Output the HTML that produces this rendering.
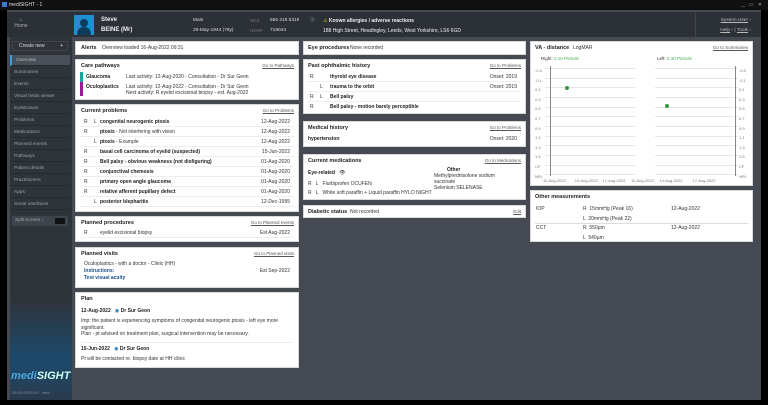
<!DOCTYPE html>
<html><head><meta charset="utf-8"><style>
*{margin:0;padding:0;box-sizing:border-box}
body{width:768px;height:405px;overflow:hidden;background:#000;font-family:"Liberation Sans",sans-serif;font-size:5px;color:#333;position:relative}
.a{position:absolute}
.p{position:absolute;background:#fff;border:1px solid #d8d8d8}
.h{position:absolute;font-weight:bold;font-size:5.5px;color:#222}
.lk{position:absolute;right:4px;text-decoration:underline;color:#555;font-size:4.5px}
.r{position:absolute;left:4px;right:4px;height:10px;border-bottom:1px solid #eee;line-height:10px;white-space:nowrap}
.r span{position:absolute}
b{color:#222}
.nav{position:absolute;left:10px;width:60px;height:11px;line-height:11px;padding-left:4px;color:#9aa0a8;font-size:4.8px;border-bottom:1px solid #262a30}
.g{position:absolute;left:14px;right:14px;height:1px;background:#e6e6e6}
.yl{position:absolute;font-size:4px;color:#777}
</style></head><body>
<div class="a" style="left:0;top:0;width:768px;height:10px;background:#111;color:#ddd;font-size:5px;line-height:10px;padding-left:9px"><span style="position:absolute;left:2px;top:2px;width:5px;height:5px;background:#3a7bd5"></span>mediSIGHT - 1<span style="position:absolute;right:6px;color:#aaa">_ &nbsp; ▭ &nbsp; ✕</span></div>
<div class="a" style="left:7px;top:10px;width:754px;height:390px;background:#454a52"></div>
<div class="a" style="left:7px;top:12px;width:754px;height:25px;background:#2c3037"></div>
<div class="a" style="left:7px;top:12px;width:28px;height:25px;color:#aaa;text-align:center;font-size:5px;padding-top:5px">⌂<br>Home</div>
<div class="a" style="left:74px;top:15px;width:20px;height:20px;background:#1e8fd0"><svg width="20" height="20"><circle cx="10" cy="8" r="4" fill="#0d3d5c"/><path d="M3 20 Q3 12 10 12 Q17 12 17 20Z" fill="#0d3d5c"/></svg></div>
<div class="a" style="left:101px;top:15px;color:#eee;font-weight:bold;font-size:6px;line-height:10px">Steve<br>BEINE (Mr)</div>
<div class="a" style="left:193px;top:16px;color:#ddd;font-size:4.8px;line-height:10px">Male<br>29-May-1944 (78y)</div>
<div class="a" style="left:250px;top:16px;color:#777;font-size:4.5px;line-height:10px">NHS<br>HOSP</div>
<div class="a" style="left:270px;top:16px;color:#ddd;font-size:4.8px;line-height:10px">656 218 5319<br>719044</div>
<div class="a" style="left:310px;top:16px;color:#ddd;font-size:4.8px">ⓘ</div>
<div class="a" style="left:323px;top:16px;color:#eee;font-size:5px;line-height:10px"><span style="color:#e8c200">⚠</span> <b style="color:#eee">Known allergies / adverse reactions</b><br>188 High Street, Headingley, Leeds, West Yorkshire, LS6 6GD</div>
<div class="a" style="left:695px;top:12px;width:1px;height:25px;background:#444"></div>
<div class="a" style="right:17px;top:16px;color:#bbb;font-size:4.8px;line-height:10px;text-align:right"><u>System User</u> ›<br><u>Help</u> › | <u>Tools</u> ›</div>
<!-- sidebar -->
<div class="a" style="left:10px;top:37px;width:62px;height:363px;background:#2f343b"></div>
<div class="a" style="left:10px;top:300px;width:62px;height:100px;background:linear-gradient(#2f343b,#1c4a6e 60%,#2a3a4c)"></div>
<div class="a" style="left:12px;top:41px;width:56px;height:10px;border:1px solid #444;color:#ddd;font-size:5px;line-height:9px;padding-left:6px">Create new<span style="position:absolute;right:4px">+</span></div>
<div class="nav" style="top:55px;background:#4a5058;color:#bbb;border-left:2px solid #3aa0e0">Overview</div>
<div class="nav" style="top:67px">Summaries</div>
<div class="nav" style="top:79px">Events</div>
<div class="nav" style="top:91px">Visual fields viewer</div>
<div class="nav" style="top:103px">EyeBrowse</div>
<div class="nav" style="top:115px">Problems</div>
<div class="nav" style="top:127px">Medications</div>
<div class="nav" style="top:139px">Planned events</div>
<div class="nav" style="top:151px">Pathways</div>
<div class="nav" style="top:163px">Patient details</div>
<div class="nav" style="top:175px">Practitioners</div>
<div class="nav" style="top:187px">Apps</div>
<div class="nav" style="top:199px">Serial interfaces</div>
<div class="a" style="left:12px;top:216px;width:56px;height:10px;background:#3e444c;color:#aaa;font-size:4.8px;line-height:10px;padding-left:3px">Split-screen ›<span style="position:absolute;right:3px;top:2px;width:10px;height:6px;background:#111"></span></div>
<div class="a" style="left:11px;top:370px;color:#4aa8e0;font-size:11px;font-style:italic;font-weight:bold">medi<span style="color:#cfe">SIGHT</span></div>
<div class="a" style="left:12px;top:391px;color:#889;font-size:3.5px">DEVELOPED BY &nbsp; medi</div>
<!-- col1 -->
<div class="p" style="left:75px;top:41px;width:224px;height:14px"><div class="h" style="left:5px;top:3px">Alerts</div><div class="a" style="left:26px;top:3px">Overview loaded 16-Aug-2022 09:31</div></div>
<div class="p" style="left:75px;top:59px;width:224px;height:41px"><div class="h" style="left:5px;top:3px">Care pathways</div><div class="lk" style="top:3px">Go to Pathways</div>
<div class="a" style="left:4px;top:12px;width:3px;height:10px;background:#1aa5a0"></div><div class="a" style="left:4px;top:22px;width:3px;height:14px;background:#a0189a"></div>
<div class="a" style="left:10px;top:14px"><b>Glaucoma</b></div><div class="a" style="left:50px;top:14px">Last activity: 12-Aug-2020 - Consultation - Dr Sur Geon</div>
<div class="a" style="left:10px;top:24px"><b>Oculoplastics</b></div><div class="a" style="left:50px;top:24px;line-height:6px">Last activity: 12-Aug-2022 - Consultation - Dr Sur Geon<br>Next activity: R eyelid excisional biopsy - est. Aug-2022</div></div>
<div class="p" style="left:75px;top:104px;width:224px;height:108px"><div class="h" style="left:5px;top:3px">Current problems</div><div class="lk" style="top:3px">Go to Problems</div>
<div class="r" style="top:12px"><span style="left:4px">R</span><span style="left:14px">L</span><span style="left:20px"><b>congenital neurogenic ptosis</b></span><span style="right:4px">12-Aug-2022</span></div>
<div class="r" style="top:22px"><span style="left:4px">R</span><span style="left:20px"><b>ptosis</b> - Not interfering with vision</span><span style="right:4px">12-Aug-2022</span></div>
<div class="r" style="top:32px"><span style="left:14px">L</span><span style="left:20px"><b>ptosis</b> - Example</span><span style="right:4px">12-Aug-2022</span></div>
<div class="r" style="top:42px"><span style="left:4px">R</span><span style="left:20px"><b>basal cell carcinoma of eyelid (suspected)</b></span><span style="right:4px">15-Jun-2022</span></div>
<div class="r" style="top:52px"><span style="left:4px">R</span><span style="left:20px"><b>Bell palsy - obvious weakness (not disfiguring)</b></span><span style="right:4px">01-Aug-2020</span></div>
<div class="r" style="top:62px"><span style="left:4px">R</span><span style="left:20px"><b>conjunctival chemosis</b></span><span style="right:4px">01-Aug-2020</span></div>
<div class="r" style="top:72px"><span style="left:4px">R</span><span style="left:20px"><b>primary open angle glaucoma</b></span><span style="right:4px">01-Aug-2020</span></div>
<div class="r" style="top:82px"><span style="left:4px">R</span><span style="left:20px"><b>relative afferent pupillary defect</b></span><span style="right:4px">01-Aug-2020</span></div>
<div class="r" style="top:92px"><span style="left:14px">L</span><span style="left:20px"><b>posterior blepharitis</b></span><span style="right:4px">12-Dec-1995</span></div></div>
<div class="p" style="left:75px;top:216px;width:224px;height:26px"><div class="h" style="left:5px;top:3px">Planned procedures</div><div class="lk" style="top:3px">Go to Planned events</div>
<div class="r" style="top:11px"><span style="left:4px">R</span><span style="left:20px">eyelid excisional biopsy</span><span style="right:4px">Est Aug-2022</span></div></div>
<div class="p" style="left:75px;top:247px;width:224px;height:41px"><div class="h" style="left:5px;top:3px">Planned visits</div><div class="lk" style="top:3px">Go to Planned visits</div>
<div class="a" style="left:8px;top:13px;line-height:7px">Oculoplastics - with a doctor - Clinic (HH)<br><b style="color:#1a4f8a">Instructions:</b><br><b style="color:#1a4f8a">Test visual acuity</b></div><div class="a" style="right:8px;top:20px">Est Sep-2022</div></div>
<div class="p" style="left:75px;top:292px;width:224px;height:76px"><div class="h" style="left:5px;top:3px">Plan</div>
<div class="a" style="left:5px;top:15px"><b>12-Aug-2022</b> &nbsp; <span style="color:#1a6fb0">◉</span> <b>Dr Sur Geon</b></div>
<div class="a" style="left:5px;top:25px;line-height:6.5px">Imp: the patient is experiencing symptoms of congenital neurogenic ptosis - left eye more<br>significant.<br>Plan - pt advised on treatment plan, surgical intervention may be necessary.</div>
<div class="a" style="left:5px;right:5px;top:49px;height:1px;background:#eee"></div>
<div class="a" style="left:5px;top:53px"><b>15-Jun-2022</b> &nbsp; <span style="color:#1a6fb0">◉</span> <b>Dr Sur Geon</b></div>
<div class="a" style="left:5px;top:63px">Pt will be contacted re. biopsy date at HH clinic</div></div>
<!-- col2 -->
<div class="p" style="left:303px;top:41px;width:223px;height:14px"><div class="h" style="left:4px;top:3px">Eye procedures</div><div class="a" style="left:46px;top:3px">None recorded</div></div>
<div class="p" style="left:303px;top:59px;width:223px;height:55px"><div class="h" style="left:4px;top:3px">Past ophthalmic history</div><div class="lk" style="top:3px">Go to Problems</div>
<div class="r" style="top:12px"><span style="left:2px">R</span><span style="left:22px"><b>thyroid eye disease</b></span><span style="right:4px">Onset: 2019</span></div>
<div class="r" style="top:22px"><span style="left:12px">L</span><span style="left:22px"><b>trauma to the orbit</b></span><span style="right:4px">Onset: 2019</span></div>
<div class="r" style="top:32px"><span style="left:2px">R</span><span style="left:12px">L</span><span style="left:22px"><b>Bell palsy</b></span></div>
<div class="r" style="top:42px;border:0"><span style="left:2px">R</span><span style="left:22px"><b>Bell palsy - motion barely perceptible</b></span></div></div>
<div class="p" style="left:303px;top:121px;width:223px;height:26px"><div class="h" style="left:4px;top:3px">Medical history</div><div class="lk" style="top:3px">Go to Problems</div>
<div class="r" style="top:12px;border:0"><span style="left:0"><b>hypertension</b></span><span style="right:4px">Onset: 2020</span></div></div>
<div class="p" style="left:303px;top:154px;width:223px;height:46px"><div class="h" style="left:4px;top:3px">Current medications</div><div class="lk" style="top:3px">Go to Medications</div>
<div class="a" style="left:4px;top:15px"><b>Eye-related</b> &nbsp; 👁</div><div class="a" style="left:143px;top:12px"><b>Other</b></div>
<div class="a" style="left:130px;top:18px;line-height:6px">Methylprednisolone sodium<br>succinate<br>Selenium SELENASE</div>
<div class="a" style="left:4px;top:26px">R &nbsp; L &nbsp; Flurbiprofen OCUFEN</div>
<div class="a" style="left:4px;top:35px">R &nbsp; L &nbsp; White soft paraffin + Liquid paraffin HYLO NIGHT</div></div>
<div class="p" style="left:303px;top:205px;width:223px;height:13px"><div class="h" style="left:4px;top:3px">Diabetic status</div><div class="a" style="left:46px;top:3px">Not recorded</div><div class="lk" style="top:3px">Edit</div></div>
<!-- col3 -->
<div class="p" style="left:530px;top:41px;width:223px;height:145px"><div class="h" style="left:4px;top:3px">VA - distance</div><div class="a" style="left:42px;top:3px">LogMAR</div><div class="lk" style="top:3px">Go to Summaries</div>
<div class="a" style="left:10px;top:14px;font-size:4.5px">Right: <span style="color:#4caf50">0.10 Pinhole</span></div>
<div class="a" style="left:126px;top:14px;font-size:4.5px">Left: <span style="color:#4caf50">0.40 Pinhole</span></div>
<div class="g" style="top:26px;left:14px;right:14px"></div><div class="g" style="top:35.5px"></div><div class="g" style="top:45px"></div><div class="g" style="top:55px"></div><div class="g" style="top:64.5px"></div><div class="g" style="top:74px"></div><div class="g" style="top:84px"></div><div class="g" style="top:93.5px"></div><div class="g" style="top:103px"></div><div class="g" style="top:113px"></div><div class="g" style="top:122.5px"></div><div class="g" style="top:132px"></div>
<div class="a" style="left:104px;top:22px;width:20px;height:112px;background:#fff"></div>
<div class="a" style="left:19px;top:24px;width:1px;height:110px;background:#888"></div><div class="a" style="left:204px;top:24px;width:1px;height:110px;background:#888"></div>
<div class="yl" style="left:4px;top:24px;line-height:9.6px">-0.3<br>-0.1<br>0.1<br>0.3<br>0.5<br>0.7<br>0.9<br>1.1<br>1.3<br>1.5<br>CF<br>NPL</div>
<div class="yl" style="left:208px;top:24px;line-height:9.6px">-0.3<br>-0.1<br>0.1<br>0.3<br>0.5<br>0.7<br>0.9<br>1.1<br>1.3<br>1.5<br>CF<br>NPL</div>
<div class="a" style="left:34px;top:44px;width:4px;height:4px;border-radius:50%;background:#2e9a3a"></div>
<div class="a" style="left:134px;top:62px;width:4px;height:4px;border-radius:50%;background:#2e9a3a"></div>
<div class="yl" style="left:12px;top:136px;word-spacing:0">11-Aug-2022 &nbsp;&nbsp;&nbsp;&nbsp;&nbsp;&nbsp; 14-Aug-2022 &nbsp;&nbsp; 17-Aug-2022 &nbsp;&nbsp;&nbsp; 11-Aug-2022 &nbsp;&nbsp;&nbsp; 14-Aug-2022 &nbsp;&nbsp;&nbsp;&nbsp;&nbsp;&nbsp;&nbsp; 17-Aug-2022</div></div>
<div class="p" style="left:530px;top:190px;width:223px;height:52px"><div class="h" style="left:4px;top:3px">Other measurements</div>
<div class="a" style="left:5px;top:14px;line-height:9.5px">IOP<br><br>CCT</div>
<div class="a" style="left:52px;top:14px;line-height:9.5px">R &nbsp;15mmHg (Peak 16)<br>L &nbsp;20mmHg (Peak 22)<br>R &nbsp;550µm<br>L &nbsp;540µm</div>
<div class="a" style="left:140px;top:14px;line-height:9.5px">12-Aug-2022<br><br>12-Aug-2022</div>
<div class="a" style="left:4px;right:4px;top:32px;height:1px;background:#ddd"></div></div>
</body></html>
